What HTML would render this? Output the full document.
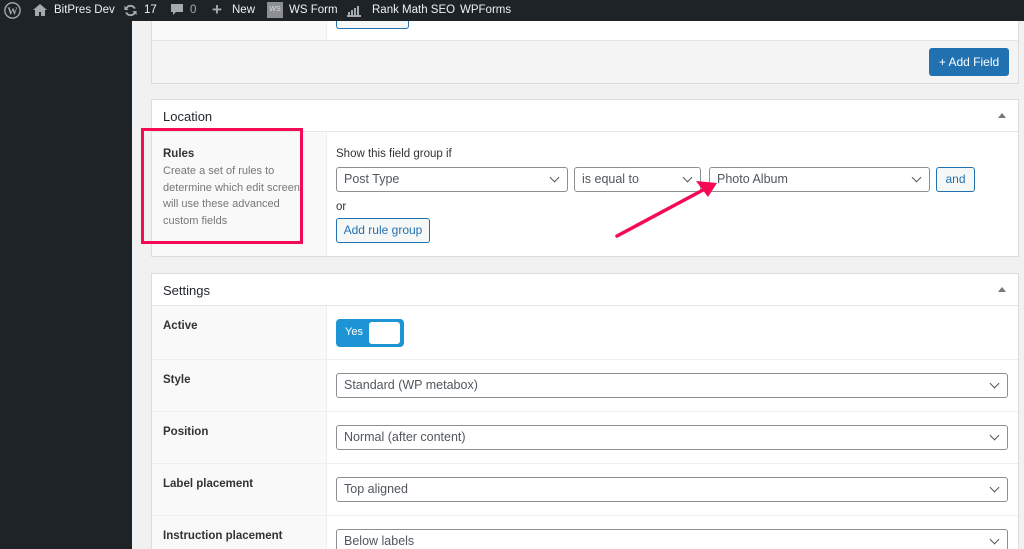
<!DOCTYPE html>
<html style="overflow:hidden;width:1024px;height:549px"><head><meta charset="utf-8">
<style>
*{box-sizing:border-box;margin:0;padding:0}
body{width:1024px;height:549px;overflow:hidden;background:#f1f1f1;font-family:"Liberation Sans",sans-serif;font-size:13px;color:#444;position:relative}
.bar{position:absolute;left:0;top:0;width:1024px;height:21px;background:#1d2327;color:#f0f0f1;font-size:11.5px;z-index:10}
.bar span{position:absolute;top:4px;white-space:nowrap}
.side{position:absolute;left:0;top:21px;width:132px;height:528px;background:#1d2327}
.box{position:absolute;left:151px;width:868px;background:#fff;border:1px solid #dcdcde;overflow:hidden}
.hd{height:32px;border-bottom:1px solid #e5e5e5;padding:9px 11px;font-size:13px;color:#23282d}
.tri{position:absolute;right:12px;top:13px;width:0;height:0;border-left:4px solid transparent;border-right:4px solid transparent;border-bottom:5px solid #777}
.row{position:relative;border-top:1px solid #eee}
.lab{position:absolute;left:0;top:0;bottom:0;width:175px;background:#f9f9f9;border-right:1px solid #eee;padding:14px 11px;font-weight:bold;font-size:11.5px;color:#333}
.sel{position:absolute;height:25px;border:1px solid #8c8f94;border-radius:3px;background:#fff;padding:4px 7px;font-size:12.5px;color:#50575e}
.sel:after{content:"";position:absolute;right:9px;top:6px;width:6px;height:6px;border-right:1.5px solid #50575e;border-bottom:1.5px solid #50575e;transform:rotate(45deg)}
.btn{position:absolute;border:1px solid #2271b1;border-radius:3px;background:#f6f7f7;color:#2271b1;font-size:12px;text-align:center}
</style></head><body>
<div class="bar">
<svg style="position:absolute;left:4px;top:2px" width="17" height="17" viewBox="0 0 20 20"><circle cx="10" cy="10" r="9" fill="none" stroke="#a7aaad" stroke-width="1.6"/><text x="10" y="14.5" font-size="12" font-family="Liberation Serif" font-weight="bold" text-anchor="middle" fill="#a7aaad">W</text></svg>
<svg style="position:absolute;left:33px;top:3px" width="14" height="14" viewBox="0 0 14 14"><path d="M7 1L0 7h2v6h4V9h2v4h4V7h2z" fill="#a7aaad"/></svg>
<span style="left:54px">BitPres Dev</span>
<svg style="position:absolute;left:123px;top:3px" width="15" height="15" viewBox="0 0 16 16"><path d="M8 2a6 6 0 0 1 5.6 4h-2.2A4 4 0 0 0 4.5 6L6 7.5H1.5V3l1.5 1.5A6 6 0 0 1 8 2zM8 14a6 6 0 0 1-5.6-4h2.2a4 4 0 0 0 6.9 0L10 8.5h4.5V13L13 11.5A6 6 0 0 1 8 14z" fill="#a7aaad"/></svg>
<span style="left:144px">17</span>
<svg style="position:absolute;left:170px;top:3px" width="14" height="14" viewBox="0 0 14 14"><path d="M1 1h12v8H6l-3 3V9H1z" fill="#a7aaad"/></svg>
<span style="left:190px;color:#a7aaad">0</span>
<span style="left:212px;font-size:17px;top:0;font-weight:bold;color:#a7aaad">+</span>
<span style="left:232px">New</span>
<span style="left:267px;top:2px;width:16px;height:16px;background:#8c8f94;color:#dcdcde;font-size:7px;line-height:16px;text-align:center">WS</span>
<span style="left:289px">WS Form</span>
<svg style="position:absolute;left:346px;top:4px" width="16" height="13" viewBox="0 0 16 13"><path d="M1 12h14M3 11V8M6 11V6M9 11V4M12 11V2" stroke="#a7aaad" stroke-width="2"/></svg>
<span style="left:372px">Rank Math SEO</span>
<span style="left:460px">WPForms</span>
</div>
<div class="side"></div>

<div class="box" style="top:0;height:84px;background:#f4f4f4">
<div style="position:absolute;left:0;top:0;width:175px;height:40px;background:#f9f9f9;border-right:1px solid #eee;border-bottom:1px solid #e5e5e5"></div>
<div style="position:absolute;left:175px;top:0;right:0;height:40px;background:#fff;border-bottom:1px solid #e5e5e5"></div>
<div style="position:absolute;left:184px;top:15px;width:73px;height:13px;border:1px solid #2271b1;border-top:none;border-radius:0 0 3px 3px;background:#f6f7f7"></div>
<div style="position:absolute;left:777px;top:47px;width:80px;height:28px;background:#2271b1;border-radius:3px;color:#fff;font-size:12px;text-align:center;line-height:28px">+ Add Field</div>
</div>

<div class="box" style="top:99px;height:158px">
<div class="hd">Location</div><div class="tri"></div>
<div class="row" style="height:125px;border-top:none">
<div class="lab" style="padding-top:16px">Rules<div style="font-weight:normal;color:#777;font-size:11px;line-height:16.5px;margin-top:3px;white-space:nowrap;overflow:hidden;width:152px">Create a set of rules to<br>determine which edit screen<br>will use these advanced<br>custom fields</div></div>
<div style="position:absolute;left:184px;top:16px;font-size:11.5px;color:#333">Show this field group if</div>
<div class="sel" style="left:184px;top:35px;width:232px">Post Type</div>
<div class="sel" style="left:422px;top:35px;width:127px">is equal to</div>
<div class="sel" style="left:557px;top:35px;width:221px">Photo Album</div>
<div class="btn" style="left:784px;top:35px;width:39px;height:25px;line-height:23px">and</div>
<div style="position:absolute;left:184px;top:69px;font-size:11.5px;color:#333">or</div>
<div class="btn" style="left:184px;top:86px;width:94px;height:25px;line-height:23px">Add rule group</div>
</div></div>

<div class="box" style="top:273px;height:280px">
<div class="hd">Settings</div><div class="tri"></div>
<div class="row" style="height:53px;border-top:none"><div class="lab">Active</div>
<div style="position:absolute;left:184px;top:13px;width:68px;height:28px;background:#1d94d4;border-radius:4px;color:#fff;font-size:11px;padding:7px 9px">Yes<div style="position:absolute;right:4px;top:3px;width:31px;height:22px;background:#fff;border-radius:3px"></div></div></div>
<div class="row" style="height:52px"><div class="lab">Style</div><div class="sel" style="left:184px;top:13px;width:672px">Standard (WP metabox)</div></div>
<div class="row" style="height:52px"><div class="lab">Position</div><div class="sel" style="left:184px;top:13px;width:672px">Normal (after content)</div></div>
<div class="row" style="height:52px"><div class="lab">Label placement</div><div class="sel" style="left:184px;top:13px;width:672px">Top aligned</div></div>
<div class="row" style="height:52px"><div class="lab">Instruction placement</div><div class="sel" style="left:184px;top:13px;width:672px">Below labels</div></div>
</div>

<div style="position:absolute;left:141px;top:128px;width:162px;height:116px;border:3px solid #f50a55"></div>
<svg style="position:absolute;left:0;top:0" width="1024" height="549"><line x1="617" y1="236" x2="703" y2="190" stroke="#f50a55" stroke-width="3.5" stroke-linecap="round"/><path d="M717 183L696 181L708 197Z" fill="#f50a55"/></svg>
</body></html>
